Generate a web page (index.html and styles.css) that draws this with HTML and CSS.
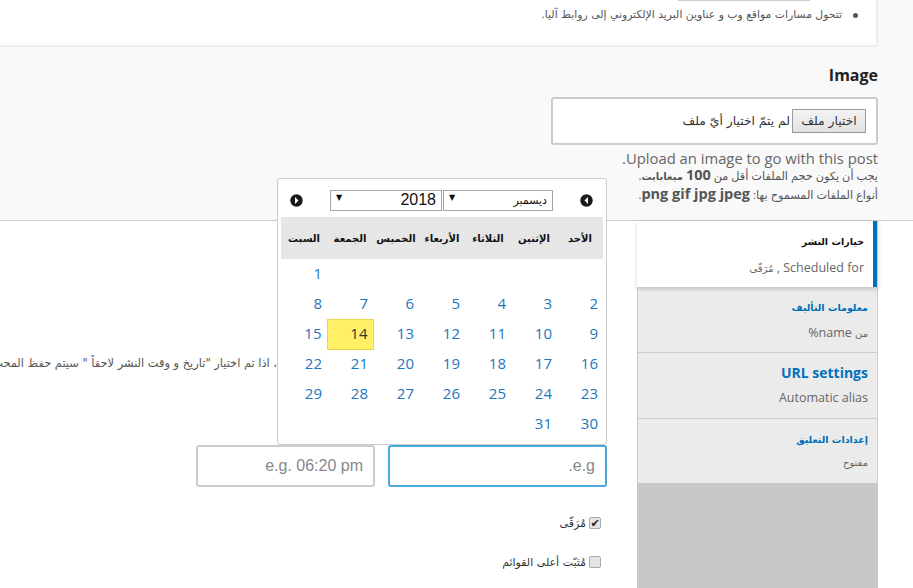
FILE: index.html
```html
<!DOCTYPE html>
<html lang="ar" dir="rtl">
<head>
<meta charset="utf-8">
<title>Post</title>
<link rel="stylesheet" href="styles.css">
</head>
<body>
<div class="page">
  <section class="top">
    <div class="help-box">
      <div class="help-rule"></div>
      <ul class="help-list"><li><span class="bullet"></span><span>تتحول مسارات مواقع وب و عناوين البريد الإلكتروني إلى روابط آليا.</span></li></ul>
    </div>
    <div class="image-field">
      <h3 class="field-title">Image</h3>
      <div class="file-box">
        <span class="file-btn">اختيار ملف</span>
        <span class="file-name">لم يتمّ اختيار أيّ ملف</span>
      </div>
      <p class="desc-main">Upload an image to go with this post.</p>
      <p class="desc-ar">يجب أن يكون حجم الملفات أقل من <b>100</b> <b class="ar-bold">ميغابايت</b>.</p>
      <p class="desc-ar">أنواع الملفات المسموح بها: <b>png gif jpg jpeg</b>.</p>
    </div>
  </section>

  <section class="panels">
    <nav class="tabs">
      <div class="tab active"><div class="tab-title">خيارات النشر</div><div class="tab-sum">Scheduled for , <span class="ar-sm">مُرَقّى</span></div></div>
      <div class="tab"><div class="tab-title">معلومات التأليف</div><div class="tab-sum"><span class="ar-sm">من</span> name%</div></div>
      <div class="tab"><div class="tab-title en">URL settings</div><div class="tab-sum">Automatic alias</div></div>
      <div class="tab"><div class="tab-title">إعدادات التعليق</div><div class="tab-sum"><span class="ar-sm">مفتوح</span></div></div>
    </nav>
    <div class="content">
      <p class="note">، اذا تم اختيار "تاريخ و وقت النشر لاحقاً " سيتم حفظ المحت</p>
      <div class="datetime">
        <input class="text-input date-input" type="text" placeholder="e.g.">
        <input class="text-input time-input" type="text" placeholder="e.g. 06:20 pm">
      </div>
      <label class="check first"><input type="checkbox" checked><span>مُرَقّى</span></label>
      <label class="check"><input type="checkbox"><span>مُثبّت أعلى القوائم</span></label>
    </div>
  </section>

  <div class="datepicker">
    <div class="dp-head">
      <svg class="dp-nav" viewBox="0 0 13 13" width="13" height="13"><circle cx="6.5" cy="6.5" r="6.2" fill="#1a1a1a"/><path d="M8 3v7L4.5 6.5z" fill="#fff"/></svg>
      <div class="dp-selects">
        <div class="dp-select dp-month"><span class="dp-val">ديسمبر</span><span class="dp-arrow">▼</span></div>
        <div class="dp-select dp-year"><span class="dp-val">2018</span><span class="dp-arrow">▼</span></div>
      </div>
      <svg class="dp-nav" viewBox="0 0 13 13" width="13" height="13"><circle cx="6.5" cy="6.5" r="6.2" fill="#1a1a1a"/><path d="M5 3v7l3.5-3.5z" fill="#fff"/></svg>
    </div>
    <table class="dp-table">
      <thead><tr><th>الأحد</th><th>الإثنين</th><th>الثلاثاء</th><th>الأربعاء</th><th>الخميس</th><th>الجمعة</th><th>السبت</th></tr></thead>
      <tbody>
        <tr><td></td><td></td><td></td><td></td><td></td><td></td><td>1</td></tr>
        <tr><td>2</td><td>3</td><td>4</td><td>5</td><td>6</td><td>7</td><td>8</td></tr>
        <tr><td>9</td><td>10</td><td>11</td><td>12</td><td>13</td><td class="today">14</td><td>15</td></tr>
        <tr><td>16</td><td>17</td><td>18</td><td>19</td><td>20</td><td>21</td><td>22</td></tr>
        <tr><td>23</td><td>24</td><td>25</td><td>26</td><td>27</td><td>28</td><td>29</td></tr>
        <tr><td>30</td><td>31</td><td></td><td></td><td></td><td></td><td></td></tr>
      </tbody>
    </table>
  </div>
</div>
</body>
</html>
```

FILE: styles.css
```css
* { box-sizing: border-box; }
html, body { margin: 0; padding: 0; height: 100%; overflow: hidden; }
body {
  background: #f9f9f9;
  color: #555;
  font-family: "Open Sans", "DejaVu Sans", sans-serif;
  font-size: 14px;
}
.page { position: relative; height: 588px; overflow: hidden; display: flex; flex-direction: column; }

.top { height: 221px; flex: none; border-bottom: 1px solid #ccc; }
.help-box {
  height: 47px;
  margin-right: 35px;
  background: #fff;
  border-right: 2px solid #eee;
  border-bottom: 2px solid #eee;
  border-bottom-right-radius: 3px;
}
.help-rule { width: 132px; height: 1px; margin-right: 66px; background: #ccc; }
.help-list { list-style: none; margin: 0; padding: 6px 18px 0 0; font-family: "DejaVu Sans", sans-serif; font-size: 10.8px; line-height: 16px; color: #555; }
.help-list li { display: flex; align-items: center; gap: 11px; }
.bullet { flex: none; width: 5px; height: 5px; border-radius: 50%; background: #555; }

.image-field { margin-right: 35px; padding-top: 17px; }
.field-title { margin: 0; font-size: 16px; line-height: 22px; font-weight: 700; color: #222; }
.file-box {
  display: flex;
  align-items: center;
  width: 327px;
  height: 48px;
  margin-top: 11px;
  padding: 0 10px 0 0;
  background: #fff;
  border: 2px solid #ccc;
  border-radius: 3px;
  font-family: "DejaVu Sans", sans-serif;
  font-size: 12.3px;
  color: #333;
}
.file-btn {
  flex: none;
  width: 74px;
  height: 24px;
  line-height: 22px;
  text-align: center;
  background: linear-gradient(#f3f3f3, #e2e2e2);
  border: 1px solid #999;
}
.file-name { margin-right: 2px; }
.desc-main { margin: 4px 0 0; font-size: 14.8px; line-height: 18px; color: #666; }
.desc-ar { height: 19px; margin: 0; font-size: 11.3px; line-height: 18px; color: #555; }
.desc-ar b { font-size: 14.5px; line-height: 1; }
.desc-ar b.ar-bold { font-size: 10px; }

.panels { flex: 1; display: flex; min-height: 0; background: #fff; }
.tabs {
  flex: none;
  width: 241px;
  margin-right: 35px;
  background: #c8c8c8;
  align-self: stretch;
}
.tab {
  height: 66px;
  padding: 11px 9px 0 9px;
  background: #ebebeb;
  border-right: 1px solid #ccc;
  border-bottom: 1px solid #ccc;
  border-left: 1px solid #ccc;
}
.tab:last-child { height: 64px; border-bottom: 0; }
.tab.active {
  position: relative;
  height: 66px;
  padding-right: 13px;
  background: #fff;
  border-left: 0;
  border-bottom: 0;
  box-shadow: 0 2px 4px rgba(0,0,0,.18);
}
.tab.active::before { content: ""; position: absolute; top: 0; bottom: 0; right: 0; width: 4px; background: #0071b9; }
.tab.active .tab-title { color: #111; }
.tab-title { font-family: "DejaVu Sans", sans-serif; font-size: 9.5px; line-height: 20px; font-weight: 700; color: #0071b9; }
.tab-title.en { margin-top: -1px; font-family: "Open Sans", sans-serif; font-size: 14px; }
.tab-sum { margin-top: 5px; font-size: 12.5px; line-height: 20px; color: #666; }
.tab.active .tab-sum { margin-top: 6px; }
.tab:last-child .tab-sum { margin-top: 2px; }
.ar-sm { font-family: "DejaVu Sans", sans-serif; font-size: 10px; }

.content { flex: 1; min-width: 0; padding: 134px 30px 0 0; overflow: hidden; }
.note { margin: 0 330px 0 0; height: 16px; overflow: hidden; font-family: "DejaVu Sans", sans-serif; font-size: 11.4px; line-height: 16px; color: #555; white-space: nowrap; }
.datetime { display: flex; gap: 13px; margin-top: 74px; }
.text-input {
  height: 42px;
  padding: 0 10px;
  background: #fff;
  border: 2px solid #ccc;
  border-radius: 3px;
  font-family: "Liberation Sans", sans-serif;
  font-size: 16px;
  outline: none;
}
.text-input::placeholder { color: #888; opacity: 1; }
.date-input { width: 219px; border-color: #4aa8dc; }
.time-input { width: 179px; }
.check { display: flex; align-items: center; gap: 3px; height: 20px; margin-top: 19px; margin-right: 6px; font-family: "DejaVu Sans", sans-serif; font-size: 11px; color: #333; }
.check.first { margin-top: 26px; }
.check input {
  appearance: none;
  display: flex;
  align-items: center;
  justify-content: center;
  width: 12px;
  height: 12px;
  margin: 0;
  background: #e4e4e4;
  border: 1px solid #aaa;
  border-radius: 2px;
}
.check input:checked::before { content: "✔"; font-size: 11px; line-height: 1; color: #222; font-family: "DejaVu Sans", sans-serif; }

.datepicker {
  position: absolute;
  top: 178px;
  left: 277px;
  width: 330px;
  height: 267px;
  padding: 0 3px;
  background: #fff;
  border: 1px solid #ccc;
  border-radius: 3px;
}
.dp-head { display: flex; align-items: center; justify-content: space-between; height: 38px; padding: 6px 10px 2px 9px; }
.dp-nav { flex: none; }
.dp-selects { display: flex; gap: 1px; }
.dp-select {
  display: flex;
  align-items: center;
  justify-content: space-between;
  height: 21px;
  padding: 0 5px 0 5px;
  background: #fff;
  border: 1px solid #a6a6a6;
  color: #111;
  font-family: "Liberation Sans", sans-serif;
}
.dp-month { width: 110px; font-family: "DejaVu Sans", sans-serif; font-size: 11px; }
.dp-year { width: 112px; font-size: 16px; }
.dp-arrow { margin-bottom: 4px; font-family: "DejaVu Sans", sans-serif; font-size: 8px; line-height: 1; }
.dp-table { width: 322px; border-collapse: collapse; table-layout: fixed; }
.dp-table th {
  height: 42px;
  padding: 0;
  background: #e6e6e6;
  font-family: "DejaVu Sans", sans-serif;
  font-size: 10px;
  font-weight: 700;
  color: #111;
  text-align: center;
}
.dp-table td {
  height: 30px;
  padding: 0 5px 2px 0;
  font-size: 15px;
  color: #1d76bd;
  text-align: right;
}
.dp-table td.today { background: #fff065; border: 1px solid #e8d44d; color: #333; }
```
